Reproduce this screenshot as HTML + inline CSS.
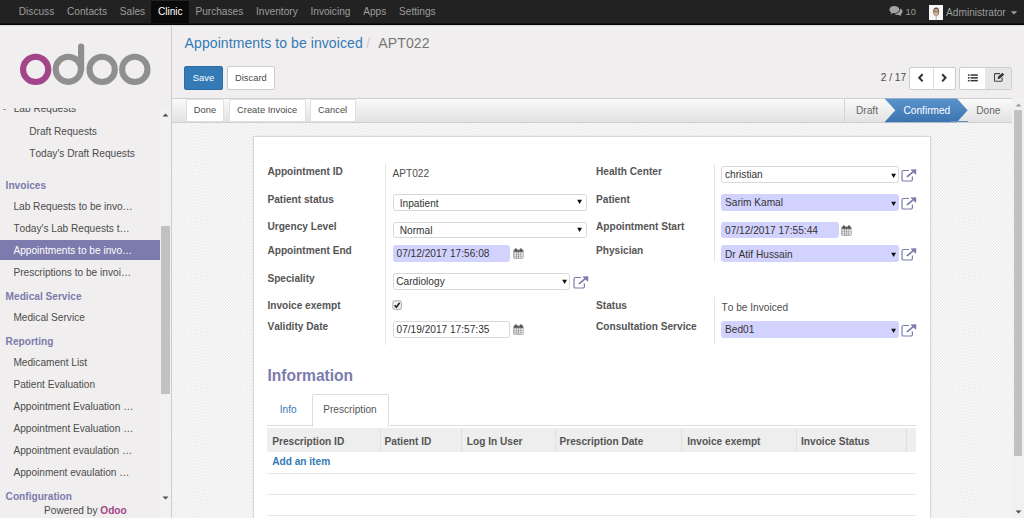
<!DOCTYPE html>
<html><head><meta charset="utf-8">
<style>
*{box-sizing:border-box}
html,body{margin:0;padding:0;width:1024px;height:518px;overflow:hidden;background:#f0eeee;font-family:"Liberation Sans",sans-serif;font-kerning:none}
.t{position:absolute;white-space:nowrap}
.r{position:absolute}
.clip{position:absolute;overflow:hidden}
.nav{position:absolute;top:0;height:24px;display:flex}
.ni{display:block;padding:0 6.4px;font-size:10.15px;line-height:24px;color:#9d9d9d;white-space:nowrap}
.ni.act{background:#0a0a0a;color:#fff;height:21.5px;margin-top:1.2px;line-height:21.5px}
.btn{position:absolute;border:1px solid #ccc;background:#fff;border-radius:2px;font-size:9.36px;line-height:22px;text-align:center;color:#4c4c4c;white-space:nowrap}
.bp{background:#337ab7;border-color:#2e6da4;color:#fff}
.grp{border:1px solid #ccc;border-radius:2px;background:#fff}
.grp div{position:absolute;top:0;bottom:0;width:1px;background:#ddd}
.grp i{position:absolute;top:0;bottom:0}
</style></head><body>
<div class="r" style="left:0px;top:0px;width:1024px;height:25px;background:#222"></div>
<div class="r" style="left:0px;top:24px;width:172px;height:494px;background:#f0eeee"></div>
<div class="r" style="left:171px;top:24px;width:1px;height:494px;background:#cdcdcd"></div>
<div class="r" style="left:172px;top:24px;width:1px;height:494px;background:#d8d8d8"></div>
<div class="r" style="left:172px;top:24px;width:852px;height:74px;background:#f0eeee"></div>
<div class="r" style="left:0px;top:23px;width:1024px;height:1px;background:#141414"></div>
<div class="r" style="left:0px;top:24px;width:1024px;height:1px;background:#060606"></div>
<div class="r" style="left:0px;top:25px;width:171px;height:1px;background:#dcdcdc"></div>
<div class="r" style="left:173px;top:25px;width:851px;height:1px;background:#dcdcdc"></div>
<div class="r" style="left:172px;top:98px;width:840px;height:420px;background:repeating-conic-gradient(#fbfbfb 0 25%,#ebebeb 0 50%) 0 0/3.12px 3.12px"></div>
<div class="nav" style="left:12.4px"><span class="ni">Discuss</span><span class="ni">Contacts</span><span class="ni">Sales</span><span class="ni act">Clinic</span><span class="ni">Purchases</span><span class="ni">Inventory</span><span class="ni">Invoicing</span><span class="ni">Apps</span><span class="ni">Settings</span></div>
<div class="t" style="left:905.60px;top:8.00px;font-size:9.36px;line-height:9.36px;font-weight:400;color:#9d9d9d;">10</div>
<div class="t" style="left:946.10px;top:8.00px;font-size:10.15px;line-height:10.15px;font-weight:400;color:#9d9d9d;">Administrator</div>
<svg class="r" style="left:1010px;top:11px" width="8" height="4"><path d="M0.8 0.3 L7.2 0.3 L4 3.6 Z" fill="#9d9d9d"/></svg>
<svg class="r" style="left:889px;top:5px" width="14" height="12" viewBox="0 0 14 12">
<path d="M5.4 1 C8.2 1 10.4 2.6 10.4 4.6 C10.4 6.6 8.2 8.2 5.4 8.2 C4.9 8.2 4.5 8.2 4.1 8.1 C3.4 8.7 2.5 9.1 1.4 9.3 C1.9 8.8 2.2 8.3 2.3 7.6 C1.1 7 .4 5.9 .4 4.6 C.4 2.6 2.6 1 5.4 1 Z" fill="#a3a3a3"/>
<path d="M11.2 3.6 C12.6 4.2 13.5 5.3 13.5 6.6 C13.5 7.8 12.8 8.8 11.7 9.4 C11.8 10 12.1 10.6 12.6 11 C11.5 10.9 10.7 10.4 10.1 9.9 C9.7 10 9.3 10 8.8 10 C7.4 10 6.2 9.6 5.3 8.9 C8.6 8.9 11.2 7 11.2 4.6 Z" fill="#a3a3a3"/>
</svg>
<svg class="r" style="left:928.8px;top:5px" width="14.4" height="15" viewBox="0 0 14.4 15">
<rect width="14.4" height="15" fill="#f7f6f6"/>
<ellipse cx="7.2" cy="6.6" rx="3" ry="4.2" fill="#6e5442"/>
<ellipse cx="7.2" cy="7.3" rx="2.3" ry="3.3" fill="#cfae90"/>
<rect x="4.9" y="6.2" width="4.6" height="0.8" fill="#7a6050"/>
<path d="M6.5 10.8 L7.9 10.8 L7.6 15 L6.8 15 Z" fill="#b8b8c0"/>
</svg>
<svg class="r" style="left:0;top:24px" width="172" height="84" viewBox="0 24 172 84">
<circle cx="35.65" cy="69.4" r="12.6" fill="none" stroke="#a24689" stroke-width="6.1"/>
<circle cx="68.3" cy="69.3" r="12.6" fill="none" stroke="#8f8f8f" stroke-width="6.1"/>
<line x1="81.1" y1="46.6" x2="81.1" y2="69.3" stroke="#8f8f8f" stroke-width="6.2" stroke-linecap="round"/>
<circle cx="102.15" cy="69.4" r="12.65" fill="none" stroke="#8f8f8f" stroke-width="6.1"/>
<circle cx="134.8" cy="69.4" r="12.65" fill="none" stroke="#8f8f8f" stroke-width="6.1"/>
</svg>
<div class="clip" style="left:0;top:108px;width:160px;height:410px">
<div class="t" style="left:13.70px;top:-4.00px;font-size:10.15px;line-height:10.15px;font-weight:400;color:#4c4c4c;">Lab Requests</div>
<div class="t" style="left:29.30px;top:19.00px;font-size:10.15px;line-height:10.15px;font-weight:400;color:#4c4c4c;">Draft Requests</div>
<div class="t" style="left:29.30px;top:41.00px;font-size:10.15px;line-height:10.15px;font-weight:400;color:#4c4c4c;">Today's Draft Requests</div>
<div class="t" style="left:5.60px;top:73.00px;font-size:10.15px;line-height:10.15px;font-weight:700;color:#7c7bad;">Invoices</div>
<div class="t" style="left:13.40px;top:94.00px;font-size:10.15px;line-height:10.15px;font-weight:400;color:#4c4c4c;">Lab Requests to be invo…</div>
<div class="t" style="left:13.40px;top:116.00px;font-size:10.15px;line-height:10.15px;font-weight:400;color:#4c4c4c;">Today's Lab Requests t…</div>
<div class="r" style="left:0px;top:131.5px;width:160px;height:20.5px;background:#7c7bad"></div>
<div class="t" style="left:13.40px;top:138.00px;font-size:10.15px;line-height:10.15px;font-weight:400;color:#fff;">Appointments to be invo…</div>
<div class="t" style="left:13.40px;top:160.00px;font-size:10.15px;line-height:10.15px;font-weight:400;color:#4c4c4c;">Prescriptions to be invoi…</div>
<div class="t" style="left:5.60px;top:184.00px;font-size:10.15px;line-height:10.15px;font-weight:700;color:#7c7bad;">Medical Service</div>
<div class="t" style="left:13.40px;top:205.00px;font-size:10.15px;line-height:10.15px;font-weight:400;color:#4c4c4c;">Medical Service</div>
<div class="t" style="left:5.60px;top:229.00px;font-size:10.15px;line-height:10.15px;font-weight:700;color:#7c7bad;">Reporting</div>
<div class="t" style="left:13.40px;top:250.00px;font-size:10.15px;line-height:10.15px;font-weight:400;color:#4c4c4c;">Medicament List</div>
<div class="t" style="left:13.40px;top:272.00px;font-size:10.15px;line-height:10.15px;font-weight:400;color:#4c4c4c;">Patient Evaluation</div>
<div class="t" style="left:13.40px;top:294.00px;font-size:10.15px;line-height:10.15px;font-weight:400;color:#4c4c4c;">Appointment Evaluation …</div>
<div class="t" style="left:13.40px;top:316.00px;font-size:10.15px;line-height:10.15px;font-weight:400;color:#4c4c4c;">Appointment Evaluation …</div>
<div class="t" style="left:13.40px;top:338.00px;font-size:10.15px;line-height:10.15px;font-weight:400;color:#4c4c4c;">Appointment evaulation …</div>
<div class="t" style="left:13.40px;top:360.00px;font-size:10.15px;line-height:10.15px;font-weight:400;color:#4c4c4c;">Appoinment evaulation …</div>
<div class="t" style="left:5.60px;top:384.00px;font-size:10.15px;line-height:10.15px;font-weight:700;color:#7c7bad;">Configuration</div>
</div>
<div class="r" style="left:3px;top:109px;width:3px;height:1px;background:#9a9a9a"></div>
<div class="r" style="left:160px;top:108px;width:11px;height:410px;background:#f1f1f1"></div>
<div class="r" style="left:161px;top:225.6px;width:9.400000000000006px;height:168.4px;background:#c1c1c1"></div>
<svg class="r" style="left:162px;top:113px" width="7" height="4"><path d="M0.5 3.5 L6.5 3.5 L3.5 0.5 Z" fill="#505050"/></svg>
<svg class="r" style="left:162px;top:496px" width="7" height="4"><path d="M0.5 0.5 L6.5 0.5 L3.5 3.5 Z" fill="#505050"/></svg>
<div class="t" style="left:44.00px;top:506.00px;font-size:10.15px;line-height:10.15px;font-weight:400;color:#4c4c4c;">Powered by <b style="color:#a24689">Odoo</b></div>
<div class="t" style="left:184.60px;top:36.00px;font-size:14.04px;line-height:14.04px;font-weight:400;color:#337ab7;letter-spacing:0.07px">Appointments to be invoiced</div>
<div class="t" style="left:366.30px;top:36.00px;font-size:14.04px;line-height:14.04px;font-weight:400;color:#ccc;">/</div>
<div class="t" style="left:378.30px;top:36.00px;font-size:14.04px;line-height:14.04px;font-weight:400;color:#777;letter-spacing:0.1px">APT022</div>
<div class="btn bp" style="left:184px;top:66px;width:39px;height:24px">Save</div>
<div class="btn" style="left:226.7px;top:66px;width:48.4px;height:24px">Discard</div>
<div class="t" style="left:880.80px;top:73.00px;font-size:10.15px;line-height:10.15px;font-weight:400;color:#4c4c4c;">2 / 17</div>
<div class="r grp" style="left:909px;top:66.5px;width:46.5px;height:23px"><div style="left:22.5px"></div></div>
<div class="r grp" style="left:959.3px;top:66.5px;width:52.4px;height:23px"><div style="left:25px"></div><i style="left:25px;right:0;background:#e6e6e6"></i></div>
<div class="r" style="left:172px;top:98px;width:840px;height:1px;background:#cfcfcf"></div>
<div class="r" style="left:172px;top:99px;width:840px;height:23px;background:linear-gradient(#fafafa,#e2e2e2)"></div>
<div class="r" style="left:172px;top:122px;width:840px;height:1px;background:#d0d0d0"></div>
<div class="btn" style="left:185.7px;top:99px;width:38.6px;height:23px;line-height:21px;border-color:#e0e0e0;border-radius:1px">Done</div>
<div class="btn" style="left:228.6px;top:99px;width:77.2px;height:23px;line-height:21px;border-color:#e0e0e0;border-radius:1px">Create Invoice</div>
<div class="btn" style="left:309.7px;top:99px;width:45.9px;height:23px;line-height:21px;border-color:#e0e0e0;border-radius:1px">Cancel</div>
<div class="r" style="left:1012px;top:98px;width:12px;height:420px;background:#f1f1f1"></div>
<div class="r" style="left:1014px;top:109.6px;width:8.299999999999955px;height:346.70000000000005px;background:#c1c1c1"></div>
<svg class="r" style="left:917px;top:73px" width="8" height="10"><path d="M5.6 1.2 L2.2 4.8 L5.6 8.4" fill="none" stroke="#333" stroke-width="2"/></svg>
<svg class="r" style="left:940px;top:73px" width="8" height="10"><path d="M2.2 1.2 L5.6 4.8 L2.2 8.4" fill="none" stroke="#333" stroke-width="2"/></svg>
<svg class="r" style="left:967px;top:73px" width="12" height="9" viewBox="0 0 12 9"><g fill="#333"><rect x="0.9" y="1.3" width="1.7" height="1.5"/><rect x="3.5" y="1.3" width="7.3" height="1.5"/><rect x="0.9" y="4.1" width="1.7" height="1.5"/><rect x="3.5" y="4.1" width="7.3" height="1.5"/><rect x="0.9" y="6.9" width="1.7" height="1.5"/><rect x="3.5" y="6.9" width="7.3" height="1.5"/></g></svg>
<svg class="r" style="left:993px;top:72px" width="12" height="11" viewBox="0 0 12 11"><path d="M7 1.6 H2.3 Q1.5 1.6 1.5 2.4 V8.4 Q1.5 9.2 2.3 9.2 H8.3 Q9.1 9.2 9.1 8.4 V5.6" fill="none" stroke="#444" stroke-width="1.1"/><path d="M9.46 0.81 L11.14 2.79 L6.84 6.39 L4.5 7.2 L5.16 4.41 Z" fill="#333"/></svg>
<div class="r" style="left:844px;top:98px;width:1px;height:24px;background:#d5d5d5"></div>
<div class="t" style="left:856.00px;top:106.00px;font-size:10.15px;line-height:10.15px;font-weight:400;color:#666;">Draft</div>
<svg class="r" style="left:884px;top:98px" width="86" height="25" viewBox="884 98 86 25"><defs><linearGradient id="g1" x1="0" y1="0" x2="0" y2="1"><stop offset="0" stop-color="#5b94cc"/><stop offset="1" stop-color="#3c73b0"/></linearGradient></defs><path d="M884.5 98.5 L957 98.5 L967.6 110.3 L957 122.2 L884.5 122.2 L895.3 110.3 Z" fill="url(#g1)"/></svg>
<div class="r" style="left:950px;top:121px;width:18px;height:1px;background:#5d8fc6"></div>
<div class="t" style="left:903.50px;top:106.00px;font-size:10.15px;line-height:10.15px;font-weight:400;color:#fff;">Confirmed</div>
<div class="t" style="left:976.30px;top:106.00px;font-size:10.15px;line-height:10.15px;font-weight:400;color:#666;">Done</div>
<div class="r" style="left:253px;top:136px;width:678px;height:382px;background:#fff;border:1px solid #d9d9d9;border-bottom:none;box-shadow:0 0 2px rgba(0,0,0,.08)"></div>
<div class="r" style="left:385px;top:163.6px;width:1px;height:181.4px;background:#e6e6e6"></div>
<div class="r" style="left:714px;top:163.6px;width:1px;height:98.4px;background:#e6e6e6"></div>
<div class="r" style="left:714px;top:297px;width:1px;height:48px;background:#e6e6e6"></div>
<div class="t" style="left:267.40px;top:167.00px;font-size:10.15px;line-height:10.15px;font-weight:700;color:#555;">Appointment ID</div>
<div class="t" style="left:267.40px;top:195.00px;font-size:10.15px;line-height:10.15px;font-weight:700;color:#555;">Patient status</div>
<div class="t" style="left:267.40px;top:222.00px;font-size:10.15px;line-height:10.15px;font-weight:700;color:#555;">Urgency Level</div>
<div class="t" style="left:267.40px;top:246.00px;font-size:10.15px;line-height:10.15px;font-weight:700;color:#555;">Appointment End</div>
<div class="t" style="left:267.40px;top:274.00px;font-size:10.15px;line-height:10.15px;font-weight:700;color:#555;">Speciality</div>
<div class="t" style="left:267.40px;top:301.00px;font-size:10.15px;line-height:10.15px;font-weight:700;color:#555;">Invoice exempt</div>
<div class="t" style="left:267.40px;top:322.00px;font-size:10.15px;line-height:10.15px;font-weight:700;color:#555;">Validity Date</div>
<div class="t" style="left:596.00px;top:167.00px;font-size:10.15px;line-height:10.15px;font-weight:700;color:#555;">Health Center</div>
<div class="t" style="left:596.00px;top:195.00px;font-size:10.15px;line-height:10.15px;font-weight:700;color:#555;">Patient</div>
<div class="t" style="left:596.00px;top:222.00px;font-size:10.15px;line-height:10.15px;font-weight:700;color:#555;">Appointment Start</div>
<div class="t" style="left:596.00px;top:246.00px;font-size:10.15px;line-height:10.15px;font-weight:700;color:#555;">Physician</div>
<div class="t" style="left:596.00px;top:301.00px;font-size:10.15px;line-height:10.15px;font-weight:700;color:#555;">Status</div>
<div class="t" style="left:596.00px;top:322.00px;font-size:10.15px;line-height:10.15px;font-weight:700;color:#555;">Consultation Service</div>
<div class="t" style="left:392.50px;top:169.00px;font-size:10.15px;line-height:10.15px;font-weight:400;color:#4c4c4c;">APT022</div>
<div class="t" style="left:721.60px;top:303.00px;font-size:10.15px;line-height:10.15px;font-weight:400;color:#4c4c4c;">To be Invoiced</div>
<div class="r" style="left:392.5px;top:194.3px;width:194.8px;height:16.6px;background:#fff;border:1px solid #d9d9d9;border-radius:2.5px"></div>
<div class="t" style="left:399.80px;top:199.00px;font-size:10.15px;line-height:10.15px;font-weight:400;color:#333;">Inpatient</div>
<svg class="r" style="left:577px;top:199px" width="6" height="6"><path d="M0.2 0.8 L5 0.8 L2.6 5 Z" fill="#111"/></svg>
<div class="r" style="left:392.5px;top:222px;width:194.8px;height:16.4px;background:#fff;border:1px solid #d9d9d9;border-radius:2.5px"></div>
<div class="t" style="left:399.80px;top:226.00px;font-size:10.15px;line-height:10.15px;font-weight:400;color:#333;">Normal</div>
<svg class="r" style="left:577px;top:227px" width="6" height="6"><path d="M0.2 0.8 L5 0.8 L2.6 5 Z" fill="#111"/></svg>
<div class="r" style="left:392.5px;top:245.2px;width:117.9px;height:16.8px;background:#d2d2ff;border:1px solid #d2d2ff;border-radius:2.5px"></div>
<div class="t" style="left:396.50px;top:249.00px;font-size:10.15px;line-height:10.15px;font-weight:400;color:#333;">07/12/2017 17:56:08</div>
<svg class="r" style="left:512.5px;top:248px" width="11" height="11" viewBox="0 0 11 11"><rect x="0.5" y="1.6" width="9.9" height="8.9" rx=".8" fill="#6a6a6a"/><g fill="#f4f4f4"><rect x="1.2" y="4.3" width="1.9" height="1.6"/><rect x="1.2" y="6.3" width="1.9" height="1.6"/><rect x="1.2" y="8.3" width="1.9" height="1.6"/><rect x="3.5" y="4.3" width="1.9" height="1.6"/><rect x="3.5" y="6.3" width="1.9" height="1.6"/><rect x="3.5" y="8.3" width="1.9" height="1.6"/><rect x="5.8" y="4.3" width="1.9" height="1.6"/><rect x="5.8" y="6.3" width="1.9" height="1.6"/><rect x="5.8" y="8.3" width="1.9" height="1.6"/><rect x="8.1" y="4.3" width="1.9" height="1.6"/><rect x="8.1" y="6.3" width="1.9" height="1.6"/><rect x="8.1" y="8.3" width="1.9" height="1.6"/></g><rect x="2.1" y="0.2" width="1.6" height="2.8" rx=".7" fill="#444"/><rect x="7.2" y="0.2" width="1.6" height="2.8" rx=".7" fill="#444"/></svg>
<div class="r" style="left:392.5px;top:273.2px;width:177.7px;height:16.4px;background:#fff;border:1px solid #d9d9d9;border-radius:2.5px"></div>
<div class="t" style="left:396.30px;top:277.00px;font-size:10.15px;line-height:10.15px;font-weight:400;color:#333;">Cardiology</div>
<svg class="r" style="left:562.3px;top:279px" width="6" height="6"><path d="M0.2 0.8 L5 0.8 L2.6 5 Z" fill="#111"/></svg>
<svg class="r" style="left:573px;top:275.8px" width="16" height="13" viewBox="0 0 16 13"><path d="M8 1.5 H2.6 Q1 1.5 1 3.1 V10.4 Q1 12 2.6 12 H9.8 Q11.4 12 11.4 10.4 V7.6" fill="none" stroke="#7c7bad" stroke-width="1.2"/><path d="M5.9 7.9 L12.7 2.4" stroke="#7c7bad" stroke-width="1.8"/><path d="M9.3 0.4 L15.3 0.2 L15.1 6.1 Z" fill="#7c7bad"/></svg>
<div class="r" style="left:392.5px;top:321px;width:117.7px;height:17.0px;background:#fff;border:1px solid #d9d9d9;border-radius:2.5px"></div>
<div class="t" style="left:396.50px;top:325.00px;font-size:10.15px;line-height:10.15px;font-weight:400;color:#333;">07/19/2017 17:57:35</div>
<svg class="r" style="left:512.5px;top:324px" width="11" height="11" viewBox="0 0 11 11"><rect x="0.5" y="1.6" width="9.9" height="8.9" rx=".8" fill="#6a6a6a"/><g fill="#f4f4f4"><rect x="1.2" y="4.3" width="1.9" height="1.6"/><rect x="1.2" y="6.3" width="1.9" height="1.6"/><rect x="1.2" y="8.3" width="1.9" height="1.6"/><rect x="3.5" y="4.3" width="1.9" height="1.6"/><rect x="3.5" y="6.3" width="1.9" height="1.6"/><rect x="3.5" y="8.3" width="1.9" height="1.6"/><rect x="5.8" y="4.3" width="1.9" height="1.6"/><rect x="5.8" y="6.3" width="1.9" height="1.6"/><rect x="5.8" y="8.3" width="1.9" height="1.6"/><rect x="8.1" y="4.3" width="1.9" height="1.6"/><rect x="8.1" y="6.3" width="1.9" height="1.6"/><rect x="8.1" y="8.3" width="1.9" height="1.6"/></g><rect x="2.1" y="0.2" width="1.6" height="2.8" rx=".7" fill="#444"/><rect x="7.2" y="0.2" width="1.6" height="2.8" rx=".7" fill="#444"/></svg>
<svg class="r" style="left:392px;top:300px" width="11" height="11" viewBox="0 0 11 11"><rect x="0.8" y="0.8" width="8.6" height="8.6" rx="1.5" fill="#eee" stroke="#999" stroke-width=".8"/><path d="M2.6 5.2 L4.4 7.2 L7.6 2.8" fill="none" stroke="#222" stroke-width="1.6"/></svg>
<div class="r" style="left:721px;top:166.4px;width:178.2px;height:17.0px;background:#fff;border:1px solid #d9d9d9;border-radius:2.5px"></div>
<div class="t" style="left:725.00px;top:170.00px;font-size:10.15px;line-height:10.15px;font-weight:400;color:#333;">christian</div>
<svg class="r" style="left:890.8px;top:173px" width="6" height="6"><path d="M0.2 0.8 L5 0.8 L2.6 5 Z" fill="#111"/></svg>
<svg class="r" style="left:900.8px;top:169.3px" width="16" height="13" viewBox="0 0 16 13"><path d="M8 1.5 H2.6 Q1 1.5 1 3.1 V10.4 Q1 12 2.6 12 H9.8 Q11.4 12 11.4 10.4 V7.6" fill="none" stroke="#7c7bad" stroke-width="1.2"/><path d="M5.9 7.9 L12.7 2.4" stroke="#7c7bad" stroke-width="1.8"/><path d="M9.3 0.4 L15.3 0.2 L15.1 6.1 Z" fill="#7c7bad"/></svg>
<div class="r" style="left:721px;top:194.1px;width:178.2px;height:16.8px;background:#d2d2ff;border:1px solid #d2d2ff;border-radius:2.5px"></div>
<div class="t" style="left:725.00px;top:198.00px;font-size:10.15px;line-height:10.15px;font-weight:400;color:#333;">Sarim Kamal</div>
<svg class="r" style="left:890.8px;top:201px" width="6" height="6"><path d="M0.2 0.8 L5 0.8 L2.6 5 Z" fill="#111"/></svg>
<svg class="r" style="left:900.8px;top:197.3px" width="16" height="13" viewBox="0 0 16 13"><path d="M8 1.5 H2.6 Q1 1.5 1 3.1 V10.4 Q1 12 2.6 12 H9.8 Q11.4 12 11.4 10.4 V7.6" fill="none" stroke="#7c7bad" stroke-width="1.2"/><path d="M5.9 7.9 L12.7 2.4" stroke="#7c7bad" stroke-width="1.8"/><path d="M9.3 0.4 L15.3 0.2 L15.1 6.1 Z" fill="#7c7bad"/></svg>
<div class="r" style="left:721px;top:221.6px;width:117.7px;height:16.8px;background:#d2d2ff;border:1px solid #d2d2ff;border-radius:2.5px"></div>
<div class="t" style="left:725.00px;top:226.00px;font-size:10.15px;line-height:10.15px;font-weight:400;color:#333;">07/12/2017 17:55:44</div>
<svg class="r" style="left:841px;top:225px" width="11" height="11" viewBox="0 0 11 11"><rect x="0.5" y="1.6" width="9.9" height="8.9" rx=".8" fill="#6a6a6a"/><g fill="#f4f4f4"><rect x="1.2" y="4.3" width="1.9" height="1.6"/><rect x="1.2" y="6.3" width="1.9" height="1.6"/><rect x="1.2" y="8.3" width="1.9" height="1.6"/><rect x="3.5" y="4.3" width="1.9" height="1.6"/><rect x="3.5" y="6.3" width="1.9" height="1.6"/><rect x="3.5" y="8.3" width="1.9" height="1.6"/><rect x="5.8" y="4.3" width="1.9" height="1.6"/><rect x="5.8" y="6.3" width="1.9" height="1.6"/><rect x="5.8" y="8.3" width="1.9" height="1.6"/><rect x="8.1" y="4.3" width="1.9" height="1.6"/><rect x="8.1" y="6.3" width="1.9" height="1.6"/><rect x="8.1" y="8.3" width="1.9" height="1.6"/></g><rect x="2.1" y="0.2" width="1.6" height="2.8" rx=".7" fill="#444"/><rect x="7.2" y="0.2" width="1.6" height="2.8" rx=".7" fill="#444"/></svg>
<div class="r" style="left:721px;top:245.2px;width:178.2px;height:16.8px;background:#d2d2ff;border:1px solid #d2d2ff;border-radius:2.5px"></div>
<div class="t" style="left:725.00px;top:250.00px;font-size:10.15px;line-height:10.15px;font-weight:400;color:#333;">Dr Atif Hussain</div>
<svg class="r" style="left:890.8px;top:252px" width="6" height="6"><path d="M0.2 0.8 L5 0.8 L2.6 5 Z" fill="#111"/></svg>
<svg class="r" style="left:900.8px;top:248.3px" width="16" height="13" viewBox="0 0 16 13"><path d="M8 1.5 H2.6 Q1 1.5 1 3.1 V10.4 Q1 12 2.6 12 H9.8 Q11.4 12 11.4 10.4 V7.6" fill="none" stroke="#7c7bad" stroke-width="1.2"/><path d="M5.9 7.9 L12.7 2.4" stroke="#7c7bad" stroke-width="1.8"/><path d="M9.3 0.4 L15.3 0.2 L15.1 6.1 Z" fill="#7c7bad"/></svg>
<div class="r" style="left:721px;top:321.2px;width:178.2px;height:16.4px;background:#d2d2ff;border:1px solid #d2d2ff;border-radius:2.5px"></div>
<div class="t" style="left:725.00px;top:325.00px;font-size:10.15px;line-height:10.15px;font-weight:400;color:#333;">Bed01</div>
<svg class="r" style="left:890.8px;top:328px" width="6" height="6"><path d="M0.2 0.8 L5 0.8 L2.6 5 Z" fill="#111"/></svg>
<svg class="r" style="left:900.8px;top:324.3px" width="16" height="13" viewBox="0 0 16 13"><path d="M8 1.5 H2.6 Q1 1.5 1 3.1 V10.4 Q1 12 2.6 12 H9.8 Q11.4 12 11.4 10.4 V7.6" fill="none" stroke="#7c7bad" stroke-width="1.2"/><path d="M5.9 7.9 L12.7 2.4" stroke="#7c7bad" stroke-width="1.8"/><path d="M9.3 0.4 L15.3 0.2 L15.1 6.1 Z" fill="#7c7bad"/></svg>
<div class="t" style="left:267.40px;top:368.00px;font-size:15.6px;line-height:15.6px;font-weight:700;color:#7c7bad;">Information</div>
<div class="t" style="left:279.70px;top:405.00px;font-size:10.15px;line-height:10.15px;font-weight:400;color:#337ab7;">Info</div>
<div class="r" style="left:311.6px;top:394.3px;width:77.89999999999998px;height:32.69999999999999px;background:#fff;border:1px solid #ddd;border-bottom:none;border-radius:2px 2px 0 0"></div>
<div class="r" style="left:267px;top:425px;width:44.60000000000002px;height:1px;background:#ddd"></div>
<div class="r" style="left:389.5px;top:425px;width:526.5px;height:1px;background:#ddd"></div>
<div class="t" style="left:323.20px;top:405.00px;font-size:10.15px;line-height:10.15px;font-weight:400;color:#555;">Prescription</div>
<div class="r" style="left:267px;top:427.5px;width:649px;height:24.69999999999999px;background:#eee"></div>
<div class="r" style="left:379.7px;top:428px;width:1.0px;height:24px;background:#e0e0e0"></div>
<div class="r" style="left:461.2px;top:428px;width:1.0px;height:24px;background:#e0e0e0"></div>
<div class="r" style="left:554.6px;top:428px;width:1.0px;height:24px;background:#e0e0e0"></div>
<div class="r" style="left:681.4px;top:428px;width:1.0px;height:24px;background:#e0e0e0"></div>
<div class="r" style="left:795.9px;top:428px;width:1.0px;height:24px;background:#e0e0e0"></div>
<div class="r" style="left:906.4px;top:428px;width:1.0px;height:24px;background:#e0e0e0"></div>
<div class="t" style="left:272.20px;top:437.00px;font-size:10.15px;line-height:10.15px;font-weight:700;color:#555;">Prescription ID</div>
<div class="t" style="left:384.60px;top:437.00px;font-size:10.15px;line-height:10.15px;font-weight:700;color:#555;">Patient ID</div>
<div class="t" style="left:466.80px;top:437.00px;font-size:10.15px;line-height:10.15px;font-weight:700;color:#555;">Log In User</div>
<div class="t" style="left:559.50px;top:437.00px;font-size:10.15px;line-height:10.15px;font-weight:700;color:#555;">Prescription Date</div>
<div class="t" style="left:687.30px;top:437.00px;font-size:10.15px;line-height:10.15px;font-weight:700;color:#555;">Invoice exempt</div>
<div class="t" style="left:801.00px;top:437.00px;font-size:10.15px;line-height:10.15px;font-weight:700;color:#555;">Invoice Status</div>
<div class="t" style="left:272.20px;top:457.00px;font-size:10.15px;line-height:10.15px;font-weight:700;color:#337ab7;">Add an item</div>
<div class="r" style="left:267px;top:472.6px;width:649px;height:1.0px;background:#e8e8e8"></div>
<div class="r" style="left:267px;top:494.2px;width:649px;height:1.0px;background:#e8e8e8"></div>
<div class="r" style="left:267px;top:515.4px;width:649px;height:1.0px;background:#e8e8e8"></div>
<svg class="r" style="left:1015px;top:103px" width="7" height="4"><path d="M0.5 3.5 L6.5 3.5 L3.5 0.5 Z" fill="#a0a0a0"/></svg>
<svg class="r" style="left:1015px;top:510px" width="7" height="4"><path d="M0.5 0.5 L6.5 0.5 L3.5 3.5 Z" fill="#505050"/></svg>
</body></html>
